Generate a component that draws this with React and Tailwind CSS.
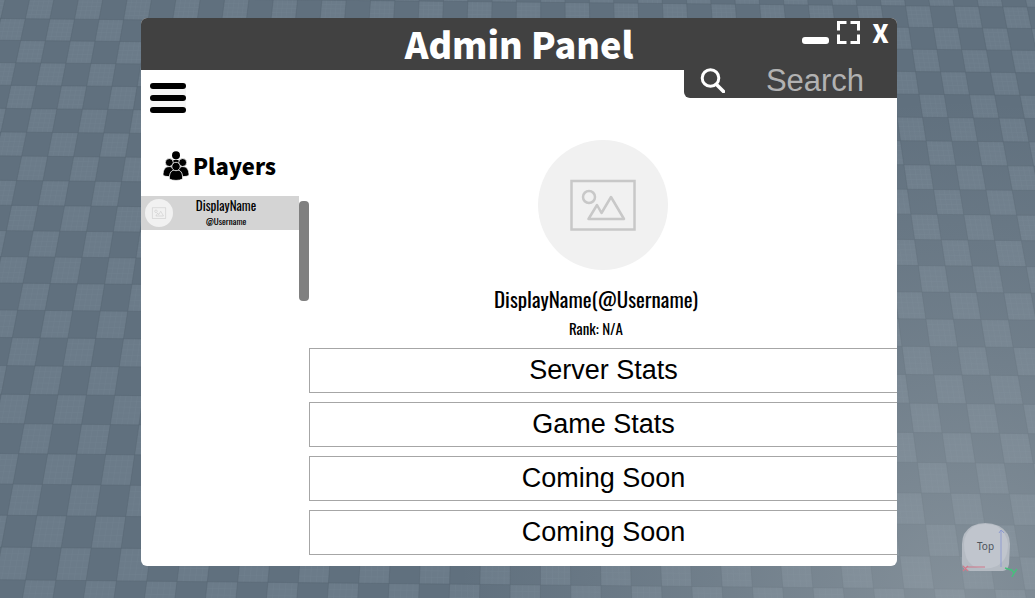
import React from "react";

const stats = ["Server Stats", "Game Stats", "Coming Soon", "Coming Soon"];

// Projects a baseplate grid coordinate (column, row) onto the screen
function project(col, row) {
  const depth = 1 - 0.00903 * row;
  const x = 542 + (24.54 * col - 443) / depth;
  const y = 18.5 + (21.61 * row + 0.24 * (col + 4)) / depth;
  return `${x.toFixed(1)} ${y.toFixed(1)}`;
}

function buildBaseplate() {
  let tiles = "";
  let studs = "";
  let seams = "";
  for (let row = -2; row < 23; row++) {
    seams += `M${project(-8, row)}L${project(42, row)}`;
    for (let col = -8; col < 42; col++) {
      if ((row + col) % 2 !== 0) continue;
      tiles += `M${project(col, row)}L${project(col + 1, row)}L${project(col + 1, row + 1)}L${project(col, row + 1)}Z`;
      for (let i = 1; i < 5; i++) {
        const t = i / 5;
        studs += `M${project(col + t, row)}L${project(col + t, row + 1)}`;
        studs += `M${project(col, row + t)}L${project(col + 1, row + t)}`;
      }
    }
  }
  for (let col = -8; col < 42; col++) {
    seams += `M${project(col, -2)}L${project(col, 23)}`;
  }
  return { tiles, studs, seams };
}

const baseplate = buildBaseplate();

function Baseplate() {
  return (
    <svg
      className="absolute inset-0 h-full w-full"
      viewBox="0 0 1035 598"
      preserveAspectRatio="xMidYMid slice"
      aria-hidden="true"
    >
      <defs>
        <radialGradient id="glare" gradientUnits="userSpaceOnUse" cx="960" cy="600" r="500">
          <stop offset="0" stopColor="#aab2b7" stopOpacity="0.48" />
          <stop offset="0.5" stopColor="#aab2b7" stopOpacity="0.22" />
          <stop offset="1" stopColor="#aab2b7" stopOpacity="0" />
        </radialGradient>
      </defs>
      <rect width="1035" height="598" fill="#60707e" />
      <path d={baseplate.tiles} fill="#6b7b89" />
      <path d={baseplate.studs} stroke="#7b8b98" strokeWidth="0.6" opacity="0.35" />
      <path d={baseplate.seams} stroke="#566571" strokeWidth="0.8" opacity="0.6" fill="none" />
      <rect width="1035" height="598" fill="url(#glare)" />
    </svg>
  );
}

function PlayersIcon() {
  return (
    <svg className="h-[30px] w-[26px]" viewBox="0 0 26 30" aria-hidden="true">
      <circle cx="13" cy="4.2" r="4" />
      <path d="M8.500 13c0-3 1.800-4.300 4.500-4.300s4.500 1.300 4.500 4.300v3h-9z" />
      <g stroke="#fff" strokeWidth="0.8">
        <circle cx="6.300" cy="11.500" r="4" />
        <circle cx="19.700" cy="11.500" r="4" />
        <path d="M0 24.500C0 18.500 2 15.600 6.300 15.600s6 3 6 9c-3 1.400-9.300 1.400-12.300-.100z" />
        <path d="M26 24.500c0-6-2-8.900-6.300-8.900s-6 3-6 9c3 1.400 9.300 1.400 12.300-.100z" />
        <path d="M6.300 28c0-6.500 2-9.200 6.700-9.200s6.700 2.700 6.700 9.200c-3.200 1.900-10.200 1.900-13.400 0z" />
        <circle cx="13" cy="15.500" r="4.200" />
      </g>
    </svg>
  );
}

function Avatar({ className }) {
  return (
    <svg className={className} viewBox="0 0 130 130" role="img" aria-label="Avatar">
      <circle cx="65" cy="65" r="65" fill="#f1f1f1" />
      <g fill="none" stroke="#c8c8c8" strokeWidth="2.5">
        <rect x="33.500" y="41" width="63" height="48.500" />
        <circle cx="51" cy="57" r="6" />
        <path d="M50.500 79L59 65l4.500 8L73 57l13 22z" strokeLinejoin="round" />
      </g>
    </svg>
  );
}

function WindowControls() {
  return (
    <div className="flex gap-2 pt-[3px] pr-2">
      <button type="button" aria-label="Minimize" className="flex h-[23px] w-[27px] items-end">
        <span className="h-[7px] w-full rounded-[3px] bg-white" />
      </button>
      <button type="button" aria-label="Maximize" className="h-[23px] w-[23px]">
        <svg viewBox="0 0 23 23" fill="none" stroke="#fff" strokeWidth="3" aria-hidden="true">
          <path d="M1.500 9.500v-8h8M13.500 1.500h8v8M21.500 13.500v8h-8M9.500 21.500h-8v-8" />
        </svg>
      </button>
      <button
        type="button"
        aria-label="Close"
        className="ml-1 flex h-[22px] w-[17px] items-center justify-center text-[25px] leading-[22px] font-black text-white"
      >
        X
      </button>
    </div>
  );
}

function SearchBar() {
  return (
    <form className="-mt-2 flex h-9 w-[213px] items-center self-end rounded-bl-md bg-[#414141]">
      <button type="button" aria-label="Submit search" className="ml-4 h-[25px] w-[25px] shrink-0">
        <svg viewBox="0 0 25 25" fill="none" stroke="#fff" aria-hidden="true">
          <circle cx="10.500" cy="10" r="8.300" strokeWidth="3" />
          <path d="M16.500 16.500l7 7" strokeWidth="3.500" strokeLinecap="round" />
        </svg>
      </button>
      <input
        type="text"
        aria-label="Search"
        placeholder="Search"
        className="ml-6 h-9 min-w-0 flex-1 pt-[2px] pr-4 text-center font-['Liberation_Sans',Arial,sans-serif] text-[31px] leading-9 text-white outline-none placeholder:text-[#b2b2b2]"
      />
    </form>
  );
}

function Sidebar() {
  return (
    <aside className="w-[168px] shrink-0">
      <button type="button" aria-label="Menu" className="mt-[13px] ml-[9px] flex w-9 flex-col gap-[6px] bg-[#f5f5f5]">
        <span className="h-[6px] w-full rounded-[3px] bg-black" />
        <span className="h-[6px] w-full rounded-[3px] bg-black" />
        <span className="h-[6px] w-full rounded-[3px] bg-black" />
      </button>
      <h2 className="mt-[38px] ml-[22px] flex h-[30px] items-center gap-1 text-[22px] leading-7 font-black">
        <PlayersIcon />
        <span className="pb-[2px]">Players</span>
      </h2>
      <div className="mt-[15px] flex">
        <ul className="flex-1">
          <li>
            <button type="button" className="flex h-[34px] w-full items-center bg-[#d4d4d4] pl-1">
              <Avatar className="h-7 w-7 shrink-0" />
              <span className="flex flex-1 flex-col items-center pr-5 pb-[2px] font-['Oswald','Liberation_Sans_Narrow','Roboto_Condensed',sans-serif]">
                <span className="text-[13px] leading-[17px]">DisplayName</span>
                <span className="text-[9px] leading-[14px]">@Username</span>
              </span>
            </button>
          </li>
        </ul>
        <div className="mt-[5px] h-[100px] w-[10px] rounded bg-[#808080]" />
      </div>
    </aside>
  );
}

function PlayerDetails() {
  return (
    <main className="flex min-w-0 flex-1 flex-col">
      <SearchBar />
      <Avatar className="mt-[42px] h-[130px] w-[130px] self-center" />
      <div className="mt-[14px] pr-[14px] text-center font-['Oswald','Liberation_Sans_Narrow','Roboto_Condensed',sans-serif]">
        <p className="text-[21px] leading-[30px]">DisplayName(@Username)</p>
        <p className="text-[15px] leading-7">Rank: N/A</p>
      </div>
      <div className="mt-[6px] flex flex-col gap-[9px] pb-[11px]">
        {stats.map((label, index) => (
          <button
            key={index}
            type="button"
            className="h-[45px] border border-r-0 border-[#a6a6a6] bg-white pb-[2px] font-['Liberation_Sans',Arial,sans-serif] text-[27px] leading-8"
          >
            {label}
          </button>
        ))}
      </div>
    </main>
  );
}

function ViewGizmo() {
  return (
    <div className="absolute right-4 bottom-5 h-[56px] w-[58px]">
      <svg viewBox="0 0 58 56" aria-hidden="true">
        <path
          d="M11 4Q24-2 38 4Q49 10 49 22L48 42Q47 48 42 49L9 49Q2 48 1 42L1 22Q1 10 11 4Z"
          fill="#b5bbc3"
        />
        <path d="M13 4Q24 0 36 4Q46 11 47 22Q47 38 36 44Q24 49 12 44Q3 38 3 22Q3 11 13 4Z" fill="#c0c5cd" />
        <path d="M40 8v37M38 11l2-3 3 3" fill="none" stroke="#8f9cd0" strokeWidth="1" />
        <path d="M5 45h19M2 44l5 5M7 44l-5 5" fill="none" stroke="#d0788a" strokeWidth="1.200" />
        <path d="M44 46l6 2M50 47l3 4 3-4M53 51l-2 4" fill="none" stroke="#46c07c" strokeWidth="1.400" />
      </svg>
      <span className="absolute top-4 left-4 font-['Noto_Sans',sans-serif] text-[10px] leading-4 text-[#4d545c]">
        Top
      </span>
    </div>
  );
}

function App() {
  return (
    <div className="relative min-h-screen overflow-hidden bg-[#60707e] pt-[18px] pr-[138px] pb-8 pl-[141px] font-['Source_Sans_Pro','Noto_Sans_CJK_JP',sans-serif] text-black">
      <Baseplate />
      <div className="relative rounded-md bg-white">
        <header className="grid h-[52px] grid-cols-[1fr_auto_1fr] rounded-t-md bg-[#414141]">
          <h1 className="col-start-2 text-[36px] leading-[50px] font-black text-white">Admin Panel</h1>
          <div className="justify-self-end">
            <WindowControls />
          </div>
        </header>
        <div className="flex">
          <Sidebar />
          <PlayerDetails />
        </div>
      </div>
      <ViewGizmo />
    </div>
  );
}

export default App;
